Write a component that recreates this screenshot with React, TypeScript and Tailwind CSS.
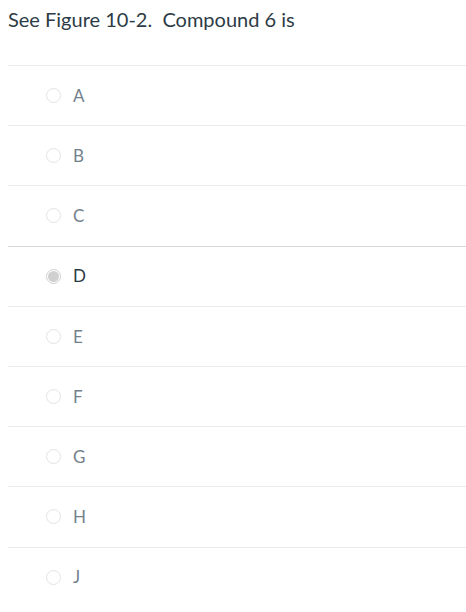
import React from "react";

const options = ["A", "B", "C", "D", "E", "F", "G", "H", "J"];

const App: React.FC = () => {
	const [selected, setSelected] = React.useState("D");

	return (
		<div className="w-[466px] min-h-[612px] bg-white font-['Lato','Liberation_Sans',sans-serif] text-[#2d3b45]">
			<div className="pl-2 pt-[5px] pb-[32px] text-[20px] leading-[28px]">
				See Figure 10-2.&nbsp; Compound 6 is
			</div>
			<div className="ml-2">
				{options.map((opt) => {
					const isSel = opt === selected;
					return (
						<label
							key={opt}
							className={`flex h-[60.2px] items-center border-t cursor-pointer ${
								isSel ? "border-[#d6d6d6]" : "border-[#ebebeb]"
							}`}
						>
							<input
								type="radio"
								name="answer"
								className="sr-only"
								checked={isSel}
								onChange={() => setSelected(opt)}
							/>
							<span
								className={`ml-[38px] flex h-[15px] w-[15px] items-center justify-center rounded-full border ${
									isSel ? "border-[#d0d0d0]" : "border-[#e3e3e3]"
								}`}
							>
								{isSel && <span className="h-[11px] w-[11px] rounded-full bg-[#d0d0d0]" />}
							</span>
							<span
								className={`ml-[12px] text-[17px] ${
									isSel ? "text-[#2d3b45]" : "text-[#73818c]"
								}`}
							>
								{opt}
							</span>
						</label>
					);
				})}
			</div>
		</div>
	);
};

export default App;
